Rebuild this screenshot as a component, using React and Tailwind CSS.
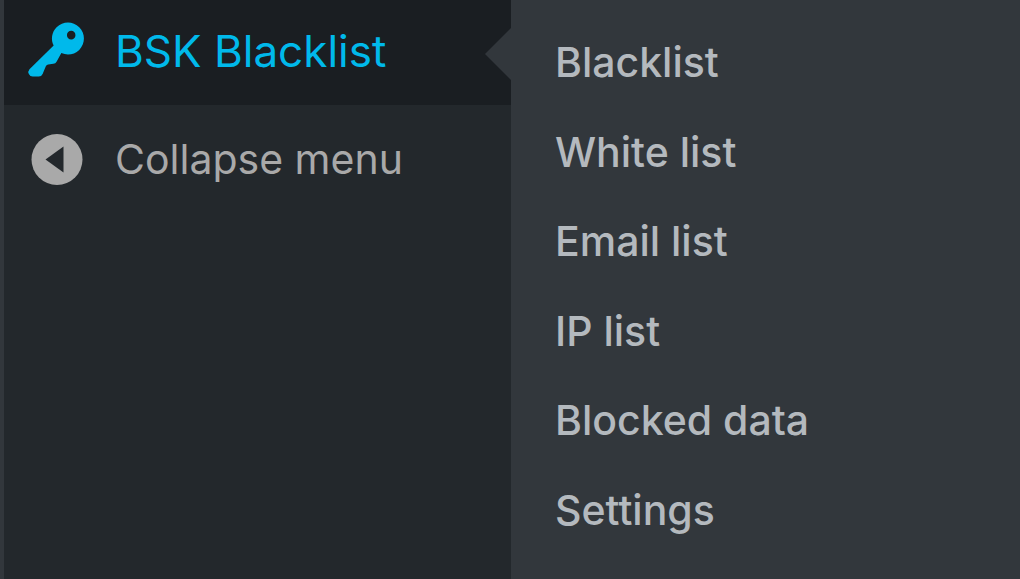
const submenu = ['Blacklist', 'White list', 'Email list', 'IP list', 'Blocked data', 'Settings'];

function KeyIcon() {
    return (
        <svg className="w-16 h-16 shrink-0" viewBox="0 0 20 20" fill="currentColor" aria-hidden="true">
            <path d="M16.95 2.58c1.96 1.95 1.96 5.12 0 7.07-1.51 1.51-3.75 1.84-5.59 1.01l-1.5 2.7q-.3.6-1 .65l-1.6.2q-.5.05-.75.55L5.5 17.2q-.35.8-1.2.8H2.4Q1.6 18 1.2 17.2q-.4-.8.2-1.5l7.55-7.39c-.92-1.87-.62-4.18.93-5.73 1.96-1.96 5.12-1.96 7.07 0zm-2.51 3.79c.74 0 1.33-.6 1.33-1.33 0-.73-.59-1.33-1.33-1.33-.73 0-1.33.6-1.33 1.33 0 .73.6 1.33 1.33 1.33z" />
        </svg>
    );
}

function CollapseIcon() {
    return (
        <svg className="w-16 h-16 shrink-0" viewBox="0 0 64 64" aria-hidden="true">
            <circle cx="32" cy="32.5" r="25.5" fill="#a9a9a9" />
            <path d="M20.5 32.5L38.5 19.5V45.5Z" fill="#23282c" />
        </svg>
    );
}

function App() {
    return (
        <div className="flex min-h-screen bg-[#23282c] font-['Inter',sans-serif]">
            {/* Main admin menu */}
            <nav className="w-[511px] shrink-0 border-l-4 border-[#32373c]">
                <a href="#blacklist" className="relative flex items-center gap-[26px] h-[105px] pl-[21px] pb-[3px] bg-[#1a1e22] text-[#00b9eb] text-[44px] leading-none whitespace-nowrap">
                    <KeyIcon />
                    <span>BSK Blacklist</span>
                    {/* Arrow pointing at the open submenu */}
                    <svg className="absolute right-0 top-7 w-[26px] h-[52px]" viewBox="0 0 26 52" aria-hidden="true">
                        <path d="M26 0V52L0 26Z" fill="#32373c" />
                    </svg>
                </a>
                <button type="button" className="flex items-center gap-[26px] w-full h-[108px] pl-[21px] text-[#a9a9a9] text-[41px] leading-none whitespace-nowrap">
                    <CollapseIcon />
                    <span>Collapse menu</span>
                </button>
            </nav>

            {/* Submenu */}
            <ul className="flex flex-col flex-1 pt-[18px] pb-6 bg-[#32373c] text-[#b4b9be] text-[41px] leading-none font-medium">
                {submenu.map((item) => (
                    <li key={item} className="flex flex-1">
                        <a href="#submenu" className="flex flex-1 items-center pl-11 whitespace-nowrap">{item}</a>
                    </li>
                ))}
            </ul>
        </div>
    );
}

export default App;
